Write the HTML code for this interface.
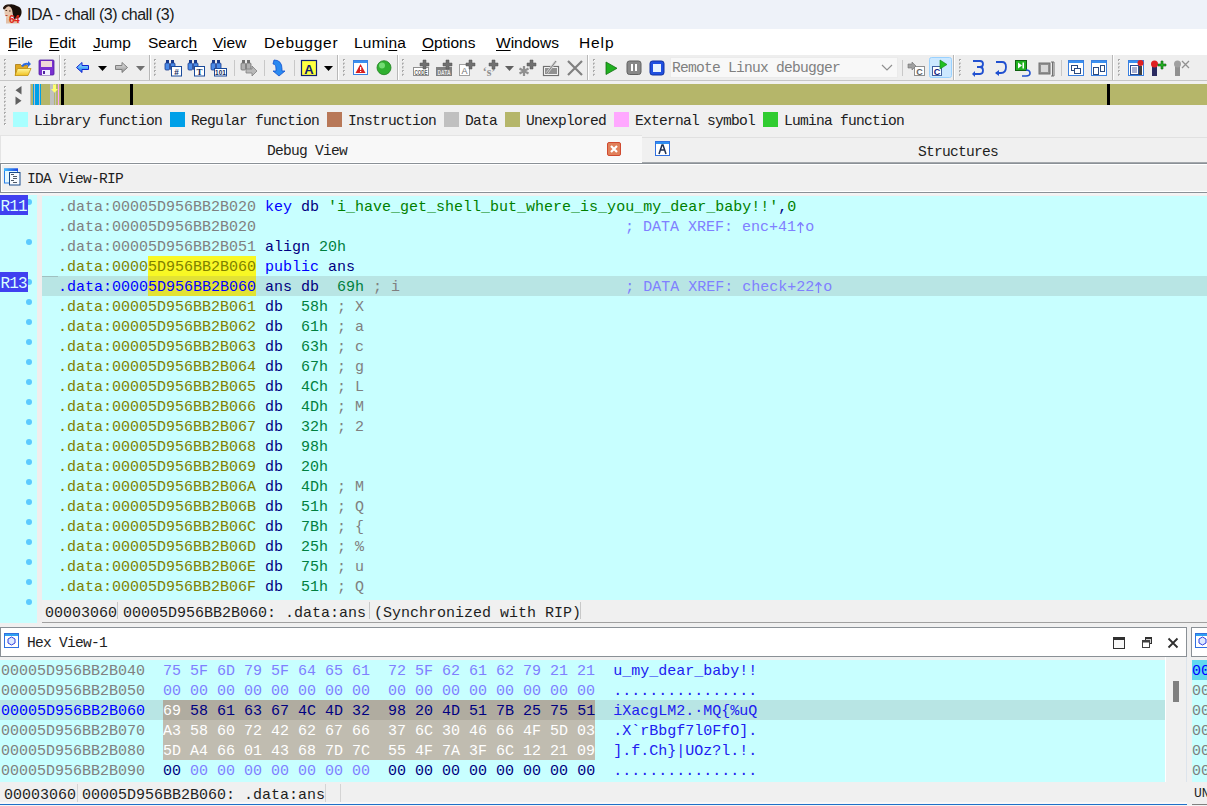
<!DOCTYPE html><html><head><meta charset="utf-8"><style>
*{margin:0;padding:0;box-sizing:border-box}
html,body{width:1207px;height:806px;overflow:hidden;background:#f0f0f0;position:relative;font-family:"Liberation Sans",sans-serif}
div,span.a,svg{position:absolute}
.mi{top:34px;font-size:15.5px;color:#000;line-height:18px;white-space:pre}
.mi u{text-decoration:underline;text-underline-offset:2px}
.lg{top:112px;width:15px;height:15px}
.lt{top:113px;font-family:"Liberation Mono",monospace;font-size:14.6px;letter-spacing:-0.76px;color:#202020;line-height:17px;white-space:pre}
.row{left:0;width:1165px;height:20px}
.tx{left:58px;top:0;height:20px;line-height:24px;font-family:"Liberation Mono",monospace;font-size:15px;white-space:pre}
.ad{color:#808080}.ay{color:#808000}.ab{color:#0000ff}
.kb{color:#0000ff}.kw{color:#000080}.gr{color:#008000}.nm{color:#008040}.cm{color:#808080}.xr{color:#8080ff}
.dot{left:26px;width:6px;height:6px;border-radius:50%;background:#5ccaff}
.st{font-family:"Liberation Mono",monospace;font-size:15px;line-height:18px;color:#1e1e1e;white-space:pre}
.hx{left:1px;height:20px;line-height:24px;font-family:"Liberation Mono",monospace;font-size:15px;white-space:pre}
</style></head><body>
<div style="left:0;top:0;width:1207px;height:29px;background:#eef2f9"></div>
<svg style="left:0;top:0" width="28" height="29" viewBox="0 0 28 29">
<path d="M3 9 Q4 4 9 4.5 Q13 3.5 17 6 Q21 7 21.5 11 Q22 15 19 18 L14 19 L12 12 Z" fill="#1a0e08"/>
<path d="M4.5 9 Q6 5.5 9.5 6.5 Q12 7.5 12.5 12 Q13 16 11 18 Q8 19.5 6 17 Q4 14 4.5 9Z" fill="#e6c6ae"/>
<path d="M3 8 Q5 4 10 5 Q7 6 5 9 Z" fill="#2a1a10"/>
<rect x="5.5" y="10" width="1.6" height="1" fill="#503020"/><rect x="9" y="10.5" width="1.6" height="1" fill="#503020"/>
<rect x="5.5" y="15" width="2" height="1" fill="#c04030"/>
<path d="M6 17 Q9 20 12 18 L14 19 Q18 20 20 23.5 L6 23.5 Q6 20 6 17Z" fill="#e2c0a8"/>
<text x="9" y="23" font-family="Liberation Sans" font-size="10" font-weight="bold" fill="#e02818" letter-spacing="-0.5">64</text>
</svg>
<div style="left:27px;top:5px;font-size:16px;letter-spacing:-0.45px;line-height:19px;color:#1a1a1a;white-space:pre">IDA - chall (3) chall (3)</div>
<div style="left:0;top:29px;width:1207px;height:26px;background:#fff"></div>
<div class="mi" style="left:8px;letter-spacing:0px"><u>F</u>ile</div>
<div class="mi" style="left:49px;letter-spacing:0px"><u>E</u>dit</div>
<div class="mi" style="left:93px;letter-spacing:0px"><u>J</u>ump</div>
<div class="mi" style="left:148px;letter-spacing:0px">Searc<u>h</u></div>
<div class="mi" style="left:213px;letter-spacing:0px"><u>V</u>iew</div>
<div class="mi" style="left:264px;letter-spacing:0.8px">Deb<u>u</u>gger</div>
<div class="mi" style="left:354px;letter-spacing:0.2px">Lumi<u>n</u>a</div>
<div class="mi" style="left:422px;letter-spacing:0px"><u>O</u>ptions</div>
<div class="mi" style="left:496px;letter-spacing:0px"><u>W</u>indows</div>
<div class="mi" style="left:579px;letter-spacing:0.9px">Help</div>
<div style="left:0;top:55px;width:1207px;height:26px;background:#eeeeee;border-bottom:1px solid #c6c6c6"></div>
<svg style="left:0;top:0" width="1207" height="82" viewBox="0 0 1207 82"><rect x="4" y="59" width="2" height="2" fill="#a8a8a8"/><rect x="5" y="60" width="1" height="1" fill="#fff"/><rect x="4" y="62.7" width="2" height="2" fill="#a8a8a8"/><rect x="5" y="63.7" width="1" height="1" fill="#fff"/><rect x="4" y="66.4" width="2" height="2" fill="#a8a8a8"/><rect x="5" y="67.4" width="1" height="1" fill="#fff"/><rect x="4" y="70.10000000000001" width="2" height="2" fill="#a8a8a8"/><rect x="5" y="71.10000000000001" width="1" height="1" fill="#fff"/><rect x="4" y="73.80000000000001" width="2" height="2" fill="#a8a8a8"/><rect x="5" y="74.80000000000001" width="1" height="1" fill="#fff"/><defs><linearGradient id="fg" x1="0" y1="0" x2="0" y2="1"><stop offset="0" stop-color="#fff8a0"/><stop offset="1" stop-color="#f0c020"/></linearGradient><linearGradient id="bg" x1="0" y1="0" x2="0" y2="1"><stop offset="0" stop-color="#a0f0ff"/><stop offset="1" stop-color="#1070f0"/></linearGradient><linearGradient id="gg" x1="0" y1="0" x2="0" y2="1"><stop offset="0" stop-color="#e8e8e8"/><stop offset="1" stop-color="#909090"/></linearGradient></defs><path d="M15.5 64.5h5l1 1h6v3h-9l-3 7z" fill="#e0a820" stroke="#a87810" stroke-width="0.8"/><path d="M17.5 68.5h13.5l-3 7h-13z" fill="url(#fg)" stroke="#c09010" stroke-width="0.8"/><path d="M21 66q3-4 7-3v-2l3 3l-3 3v-2q-3-1-5 2z" fill="#2a6ae0"/><rect x="39" y="60" width="15" height="15" rx="1" fill="#7a30d0" stroke="#5020a0" stroke-width="0.8"/><rect x="41" y="61" width="11" height="6" fill="#f0d8d8"/><rect x="42" y="70" width="8" height="5" fill="#f0f0ff"/><rect x="43" y="71" width="2" height="3" fill="#5020a0"/><rect x="59" y="55" width="1" height="25" fill="#b8b8b8"/><rect x="60" y="55" width="1" height="25" fill="#ffffff"/><rect x="64" y="59" width="2" height="2" fill="#a8a8a8"/><rect x="65" y="60" width="1" height="1" fill="#fff"/><rect x="64" y="62.7" width="2" height="2" fill="#a8a8a8"/><rect x="65" y="63.7" width="1" height="1" fill="#fff"/><rect x="64" y="66.4" width="2" height="2" fill="#a8a8a8"/><rect x="65" y="67.4" width="1" height="1" fill="#fff"/><rect x="64" y="70.10000000000001" width="2" height="2" fill="#a8a8a8"/><rect x="65" y="71.10000000000001" width="1" height="1" fill="#fff"/><rect x="64" y="73.80000000000001" width="2" height="2" fill="#a8a8a8"/><rect x="65" y="74.80000000000001" width="1" height="1" fill="#fff"/><path d="M76.5 67.5l5.5-5v3h6.5v4h-6.5v3z" fill="url(#bg)" stroke="#1020d0" stroke-width="1"/><path d="M98 66h9l-4.5 5z" fill="#000"/><path d="M127.5 67.5l-5.5-5v3h-6.5v4h6.5v3z" fill="url(#gg)" stroke="#808080" stroke-width="1"/><path d="M136 66h9l-4.5 5z" fill="#707070"/><rect x="149" y="55" width="1" height="25" fill="#b8b8b8"/><rect x="150" y="55" width="1" height="25" fill="#ffffff"/><rect x="154" y="59" width="2" height="2" fill="#a8a8a8"/><rect x="155" y="60" width="1" height="1" fill="#fff"/><rect x="154" y="62.7" width="2" height="2" fill="#a8a8a8"/><rect x="155" y="63.7" width="1" height="1" fill="#fff"/><rect x="154" y="66.4" width="2" height="2" fill="#a8a8a8"/><rect x="155" y="67.4" width="1" height="1" fill="#fff"/><rect x="154" y="70.10000000000001" width="2" height="2" fill="#a8a8a8"/><rect x="155" y="71.10000000000001" width="1" height="1" fill="#fff"/><rect x="154" y="73.80000000000001" width="2" height="2" fill="#a8a8a8"/><rect x="155" y="74.80000000000001" width="1" height="1" fill="#fff"/><rect x="166" y="60" width="3" height="3" fill="#1a3a8a"/><rect x="171" y="60" width="3" height="3" fill="#1a3a8a"/><rect x="165" y="63" width="4.5" height="7" rx="1" fill="#4a8ae8" stroke="#1a3a8a" stroke-width="0.8"/><rect x="170.5" y="63" width="4.5" height="7" rx="1" fill="#4a8ae8" stroke="#1a3a8a" stroke-width="0.8"/><rect x="171.5" y="66.5" width="10" height="9.5" fill="#fff" stroke="#1a4a9a"/><text x="176.5" y="75" font-family="Liberation Serif" font-weight="bold" font-size="9" text-anchor="middle" fill="#102a60">#</text><rect x="189" y="60" width="3" height="3" fill="#1a3a8a"/><rect x="194" y="60" width="3" height="3" fill="#1a3a8a"/><rect x="188" y="63" width="4.5" height="7" rx="1" fill="#4a8ae8" stroke="#1a3a8a" stroke-width="0.8"/><rect x="193.5" y="63" width="4.5" height="7" rx="1" fill="#4a8ae8" stroke="#1a3a8a" stroke-width="0.8"/><rect x="194.5" y="66.5" width="10" height="9.5" fill="#fff" stroke="#1a4a9a"/><text x="199.5" y="75" font-family="Liberation Serif" font-weight="bold" font-size="9" text-anchor="middle" fill="#102a60">T</text><rect x="212" y="60" width="3" height="3" fill="#1a3a8a"/><rect x="217" y="60" width="3" height="3" fill="#1a3a8a"/><rect x="211" y="63" width="4.5" height="7" rx="1" fill="#4a8ae8" stroke="#1a3a8a" stroke-width="0.8"/><rect x="216.5" y="63" width="4.5" height="7" rx="1" fill="#4a8ae8" stroke="#1a3a8a" stroke-width="0.8"/><rect x="214.5" y="68.5" width="12" height="7.5" fill="#fff" stroke="#1a4a9a"/><text x="220.5" y="75" font-family="Liberation Sans" font-weight="bold" font-size="6.5" text-anchor="middle" fill="#102a60">101</text><rect x="234" y="60" width="1" height="16" fill="#c8c8c8"/><rect x="242" y="60" width="3" height="3" fill="#707070"/><rect x="247" y="60" width="3" height="3" fill="#707070"/><rect x="241" y="63" width="4.5" height="7" rx="1" fill="#b0b0b0" stroke="#707070" stroke-width="0.8"/><rect x="246.5" y="63" width="4.5" height="7" rx="1" fill="#b0b0b0" stroke="#707070" stroke-width="0.8"/><path d="M257 71l-5-5v3h-6v4h6v3z" fill="#b8b8b8" stroke="#808080" stroke-width="0.8"/><rect x="264" y="60" width="1" height="16" fill="#c8c8c8"/><path d="M274 60q8 0 8 9v2h3l-6 5l-6-5h3v-2q0-5-3-5z" fill="#2a8af0" stroke="#1050d0" stroke-width="0.8"/><rect x="294" y="60" width="1" height="16" fill="#c8c8c8"/><rect x="301.5" y="60.5" width="15" height="15" fill="#ffff40" stroke="#102070" stroke-width="1.2"/><text x="309" y="73.5" font-family="Liberation Sans" font-weight="bold" font-size="13" text-anchor="middle" fill="#102070">A</text><path d="M324 66h9l-4.5 5z" fill="#000"/><rect x="337" y="55" width="1" height="25" fill="#b8b8b8"/><rect x="338" y="55" width="1" height="25" fill="#ffffff"/><rect x="343" y="59" width="2" height="2" fill="#a8a8a8"/><rect x="344" y="60" width="1" height="1" fill="#fff"/><rect x="343" y="62.7" width="2" height="2" fill="#a8a8a8"/><rect x="344" y="63.7" width="1" height="1" fill="#fff"/><rect x="343" y="66.4" width="2" height="2" fill="#a8a8a8"/><rect x="344" y="67.4" width="1" height="1" fill="#fff"/><rect x="343" y="70.10000000000001" width="2" height="2" fill="#a8a8a8"/><rect x="344" y="71.10000000000001" width="1" height="1" fill="#fff"/><rect x="343" y="73.80000000000001" width="2" height="2" fill="#a8a8a8"/><rect x="344" y="74.80000000000001" width="1" height="1" fill="#fff"/><rect x="353.5" y="60.5" width="14" height="14" fill="#fff" stroke="#3a80e0"/><rect x="354" y="61" width="13" height="2" fill="#3a90f0"/><path d="M360.5 64l5 9h-10z" fill="#d82020"/><rect x="360" y="67" width="1.2" height="3" fill="#fff"/><rect x="360" y="71" width="1.2" height="1" fill="#fff"/><circle cx="384" cy="67.7" r="7" fill="#30b030" stroke="#208020" stroke-width="0.8"/><circle cx="382" cy="65.5" r="3" fill="#90f090" opacity="0.7"/><rect x="397" y="55" width="1" height="25" fill="#b8b8b8"/><rect x="398" y="55" width="1" height="25" fill="#ffffff"/><rect x="402" y="59" width="2" height="2" fill="#a8a8a8"/><rect x="403" y="60" width="1" height="1" fill="#fff"/><rect x="402" y="62.7" width="2" height="2" fill="#a8a8a8"/><rect x="403" y="63.7" width="1" height="1" fill="#fff"/><rect x="402" y="66.4" width="2" height="2" fill="#a8a8a8"/><rect x="403" y="67.4" width="1" height="1" fill="#fff"/><rect x="402" y="70.10000000000001" width="2" height="2" fill="#a8a8a8"/><rect x="403" y="71.10000000000001" width="1" height="1" fill="#fff"/><rect x="402" y="73.80000000000001" width="2" height="2" fill="#a8a8a8"/><rect x="403" y="74.80000000000001" width="1" height="1" fill="#fff"/><rect x="413.5" y="67.5" width="15" height="8" fill="#fff" stroke="#909090"/><text x="414.5" y="74.5" font-family="Liberation Sans" font-weight="bold" font-size="7" textLength="13" lengthAdjust="spacingAndGlyphs" fill="#606060">CODE</text><path d="M423 60h3v3h3v3h-3v3h-3v-3h-3v-3h3z" fill="#707070" stroke="#505050" stroke-width="0.5"/><rect x="436" y="67" width="16" height="9" fill="#808080"/><text x="437.5" y="74.5" font-family="Liberation Sans" font-weight="bold" font-size="7" textLength="13" lengthAdjust="spacingAndGlyphs" fill="#e8e8e8">DATA</text><path d="M446 60h3v3h3v3h-3v3h-3v-3h-3v-3h3z" fill="#707070" stroke="#505050" stroke-width="0.5"/><rect x="459.5" y="64.5" width="10" height="11" fill="#fff" stroke="#a0a0a0"/><text x="464.5" y="74" font-family="Liberation Sans" font-size="9" text-anchor="middle" fill="#707070">A</text><path d="M469 60h3v3h3v3h-3v3h-3v-3h-3v-3h3z" fill="#707070" stroke="#505050" stroke-width="0.5"/><text x="489" y="76" font-family="Liberation Serif" font-weight="bold" font-size="12" text-anchor="middle" fill="#909090">‘s’</text><path d="M492 60h3v3h3v3h-3v3h-3v-3h-3v-3h3z" fill="#707070" stroke="#505050" stroke-width="0.5"/><path d="M505 66h9l-4.5 5z" fill="#606060"/><path d="M524 66v10M519.5 68.5l9 5M528.5 68.5l-9 5" stroke="#909090" stroke-width="2.2"/><path d="M530 60h3v3h3v3h-3v3h-3v-3h-3v-3h3z" fill="#707070" stroke="#505050" stroke-width="0.5"/><rect x="543.5" y="66.5" width="15" height="9" fill="#fff" stroke="#707070" stroke-width="1.2"/><rect x="545" y="68" width="12" height="6" fill="#909090"/><path d="M547 73l9-12" stroke="#d0d0d0" stroke-width="2.5"/><path d="M547 73l9-12" stroke="#808080" stroke-width="1" /><path d="M568 61l14 14M582 61l-14 14" stroke="#808080" stroke-width="2.2"/><rect x="587" y="55" width="1" height="25" fill="#b8b8b8"/><rect x="588" y="55" width="1" height="25" fill="#ffffff"/><rect x="593" y="59" width="2" height="2" fill="#a8a8a8"/><rect x="594" y="60" width="1" height="1" fill="#fff"/><rect x="593" y="62.7" width="2" height="2" fill="#a8a8a8"/><rect x="594" y="63.7" width="1" height="1" fill="#fff"/><rect x="593" y="66.4" width="2" height="2" fill="#a8a8a8"/><rect x="594" y="67.4" width="1" height="1" fill="#fff"/><rect x="593" y="70.10000000000001" width="2" height="2" fill="#a8a8a8"/><rect x="594" y="71.10000000000001" width="1" height="1" fill="#fff"/><rect x="593" y="73.80000000000001" width="2" height="2" fill="#a8a8a8"/><rect x="594" y="74.80000000000001" width="1" height="1" fill="#fff"/><path d="M606 62v12.5l11-6.2z" fill="#20b020" stroke="#107010" stroke-width="0.8"/><rect x="627" y="61" width="14" height="13.5" rx="2.5" fill="#888" stroke="#606060"/><rect x="631" y="64" width="2" height="7" fill="#fff"/><rect x="635" y="64" width="2" height="7" fill="#fff"/><rect x="650" y="61" width="14" height="14" rx="2.5" fill="#2050e0" stroke="#1030a0"/><rect x="653" y="64" width="8" height="8" fill="#e8f4ff"/><rect x="670.5" y="57.5" width="227" height="20" fill="#f8f8f8" stroke="#ebebeb"/><path d="M882 65l5 5l5-5" stroke="#909090" stroke-width="1.2" fill="none"/><rect x="902" y="60" width="1" height="16" fill="#c8c8c8"/><rect x="914.5" y="66.5" width="10" height="9" fill="#fff" stroke="#909090"/><text x="919.5" y="75" font-family="Liberation Sans" font-weight="bold" font-size="9" text-anchor="middle" fill="#606060">C</text><path d="M916 66l-4-4v2h-4v4h4v2z" fill="#a0a0a0" stroke="#707070" stroke-width="0.6"/><rect x="929.5" y="57.5" width="22" height="20" rx="2" fill="#cce8ff" stroke="#99d1ff"/><rect x="932.5" y="66.5" width="9" height="9" fill="#fff" stroke="#4060a0"/><text x="937" y="75" font-family="Liberation Sans" font-weight="bold" font-size="9" text-anchor="middle" fill="#102080">C</text><path d="M940 60v9l7-4.5z" fill="#20c020" stroke="#108010" stroke-width="0.6"/><rect x="953" y="55" width="1" height="25" fill="#b8b8b8"/><rect x="954" y="55" width="1" height="25" fill="#ffffff"/><rect x="959" y="59" width="2" height="2" fill="#a8a8a8"/><rect x="960" y="60" width="1" height="1" fill="#fff"/><rect x="959" y="62.7" width="2" height="2" fill="#a8a8a8"/><rect x="960" y="63.7" width="1" height="1" fill="#fff"/><rect x="959" y="66.4" width="2" height="2" fill="#a8a8a8"/><rect x="960" y="67.4" width="1" height="1" fill="#fff"/><rect x="959" y="70.10000000000001" width="2" height="2" fill="#a8a8a8"/><rect x="960" y="71.10000000000001" width="1" height="1" fill="#fff"/><rect x="959" y="73.80000000000001" width="2" height="2" fill="#a8a8a8"/><rect x="960" y="74.80000000000001" width="1" height="1" fill="#fff"/><path d="M973 61h7q3 0 3 3q0 3-3 3h-3M977 67h3q3 0 3 3.5q0 3.5-3 3.5h-6" stroke="#2050d0" stroke-width="1.8" fill="none"/><path d="M972 74l3-3v6z" fill="#2050d0"/><path d="M996 62h6q4 0 4 5q0 6-5 6h-5" stroke="#2050d0" stroke-width="1.8" fill="none"/><path d="M995 73l4-3v6z" fill="#2050d0"/><rect x="1015.5" y="60.5" width="11" height="10" fill="#20b020" stroke="#106010"/><path d="M1018 62.5v6l4-3z" fill="#fff"/><rect x="1022.5" y="62.5" width="1.5" height="6" fill="#fff"/><path d="M1026 70q4 0 4 3t-4 3h-4" stroke="#2050d0" stroke-width="1.6" fill="none"/><rect x="1039" y="63" width="11" height="11" fill="#909090" stroke="#707070"/><rect x="1041" y="65" width="7" height="7" fill="#d8d8d8"/><path d="M1051 62h3v14h-3M1052.5 62v14" stroke="#707070" stroke-width="1" fill="none"/><rect x="1061" y="60" width="1" height="16" fill="#c8c8c8"/><rect x="1068.5" y="60.5" width="15" height="15" fill="#fff" stroke="#3a80e0"/><rect x="1069" y="61" width="14" height="2" fill="#3a90f0"/><rect x="1071.5" y="65.5" width="6" height="5" fill="none" stroke="#2a4a80"/><rect x="1074.5" y="68.5" width="6" height="5" fill="#fff" stroke="#2a4a80"/><rect x="1091.5" y="60.5" width="15" height="15" fill="#fff" stroke="#3a80e0"/><rect x="1092" y="61" width="14" height="2" fill="#3a90f0"/><rect x="1093.5" y="67.5" width="5" height="7" fill="#fff" stroke="#2a4a80"/><rect x="1100.5" y="65.5" width="4" height="6" fill="#fff" stroke="#2a4a80"/><rect x="1112" y="55" width="1" height="25" fill="#b8b8b8"/><rect x="1113" y="55" width="1" height="25" fill="#ffffff"/><rect x="1118" y="59" width="2" height="2" fill="#a8a8a8"/><rect x="1119" y="60" width="1" height="1" fill="#fff"/><rect x="1118" y="62.7" width="2" height="2" fill="#a8a8a8"/><rect x="1119" y="63.7" width="1" height="1" fill="#fff"/><rect x="1118" y="66.4" width="2" height="2" fill="#a8a8a8"/><rect x="1119" y="67.4" width="1" height="1" fill="#fff"/><rect x="1118" y="70.10000000000001" width="2" height="2" fill="#a8a8a8"/><rect x="1119" y="71.10000000000001" width="1" height="1" fill="#fff"/><rect x="1118" y="73.80000000000001" width="2" height="2" fill="#a8a8a8"/><rect x="1119" y="74.80000000000001" width="1" height="1" fill="#fff"/><rect x="1128.5" y="60.5" width="15" height="15" fill="#fff" stroke="#3a80e0"/><rect x="1129" y="61" width="14" height="2" fill="#3a90f0"/><rect x="1130.5" y="65.5" width="8" height="9" fill="#fff" stroke="#2a4a90"/><path d="M1132 68h5M1132 70h5M1132 72h5" stroke="#2a3a90" stroke-width="0.8"/><rect x="1139" y="66" width="3" height="9" fill="#404040"/><circle cx="1140.5" cy="63" r="3" fill="#e02020"/><rect x="1152" y="66" width="5" height="10" fill="#2a2a60"/><circle cx="1154.5" cy="64" r="3.5" fill="#e02020"/><path d="M1161 61h2v3h3v2h-3v3h-2v-3h-3v-2h3z" fill="#20b020" stroke="#106010" stroke-width="0.6"/><rect x="1175" y="66" width="5" height="10" fill="#909090"/><circle cx="1177.5" cy="64" r="3.5" fill="#a0a0a0"/><path d="M1182 61l7 7M1189 61l-7 7" stroke="#909090" stroke-width="1.3"/></svg><div style="left:672px;top:60px;font-family:'Liberation Mono',monospace;font-size:14.6px;letter-spacing:-0.76px;line-height:17px;color:#808080;white-space:pre">Remote Linux debugger</div>
<div style="left:30px;top:84px;width:1177px;height:21px;background:#b5b66a"></div>
<div style="left:30px;top:84px;width:1px;height:21px;background:#c0c0c0"></div>
<div style="left:33px;top:84px;width:1px;height:21px;background:#00a0e8"></div>
<div style="left:34px;top:84px;width:1px;height:21px;background:#c0c0c0"></div>
<div style="left:35px;top:84px;width:4px;height:21px;background:#00a0e8"></div>
<div style="left:39px;top:84px;width:1px;height:21px;background:#c0c0c0"></div>
<div style="left:40px;top:84px;width:1px;height:21px;background:#00a0e8"></div>
<div style="left:50px;top:84px;width:4px;height:21px;background:#c0c0c0"></div>
<div style="left:55px;top:84px;width:1px;height:21px;background:#c0c0c0"></div>
<div style="left:58px;top:84px;width:1px;height:21px;background:#ffa0ff"></div>
<div style="left:61px;top:84px;width:3px;height:21px;background:#000"></div>
<div style="left:130px;top:84px;width:3px;height:21px;background:#000"></div>
<div style="left:1107px;top:84px;width:3px;height:21px;background:#000"></div>
<svg style="left:51px;top:84px" width="7" height="10" viewBox="0 0 7 10"><path d="M2 0.5h3v4.5h2l-3.5 3.8l-3.5-3.8h2z" fill="#ffff70"/></svg>
<svg style="left:0;top:80px" width="10" height="50" viewBox="0 80 10 50"><rect x="4" y="86.0" width="2" height="2" fill="#a8a8a8"/><rect x="5" y="87.0" width="1" height="1" fill="#fff"/><rect x="4" y="89.7" width="2" height="2" fill="#a8a8a8"/><rect x="5" y="90.7" width="1" height="1" fill="#fff"/><rect x="4" y="93.4" width="2" height="2" fill="#a8a8a8"/><rect x="5" y="94.4" width="1" height="1" fill="#fff"/><rect x="4" y="97.1" width="2" height="2" fill="#a8a8a8"/><rect x="5" y="98.1" width="1" height="1" fill="#fff"/><rect x="4" y="100.8" width="2" height="2" fill="#a8a8a8"/><rect x="5" y="101.8" width="1" height="1" fill="#fff"/><rect x="4" y="104.5" width="2" height="2" fill="#a8a8a8"/><rect x="5" y="105.5" width="1" height="1" fill="#fff"/><rect x="4" y="108.2" width="2" height="2" fill="#a8a8a8"/><rect x="5" y="109.2" width="1" height="1" fill="#fff"/><rect x="4" y="111.9" width="2" height="2" fill="#a8a8a8"/><rect x="5" y="112.9" width="1" height="1" fill="#fff"/><rect x="4" y="115.6" width="2" height="2" fill="#a8a8a8"/><rect x="5" y="116.6" width="1" height="1" fill="#fff"/><rect x="4" y="119.3" width="2" height="2" fill="#a8a8a8"/><rect x="5" y="120.3" width="1" height="1" fill="#fff"/><rect x="4" y="123.0" width="2" height="2" fill="#a8a8a8"/><rect x="5" y="124.0" width="1" height="1" fill="#fff"/></svg>
<svg style="left:12px;top:84px" width="12" height="22" viewBox="0 0 12 22"><path d="M9.5 2v8.5l-6-4.25z" fill="#606060"/><path d="M3.5 12.5v8.5l6-4.25z" fill="#606060"/></svg>
<div class="lg" style="left:13px;background:#a8ffff"></div><div class="lt" style="left:34px">Library function</div>
<div class="lg" style="left:170px;background:#00a0e8"></div><div class="lt" style="left:191px">Regular function</div>
<div class="lg" style="left:327px;background:#b87858"></div><div class="lt" style="left:348px">Instruction</div>
<div class="lg" style="left:444px;background:#c0c0c0"></div><div class="lt" style="left:465px">Data</div>
<div class="lg" style="left:505px;background:#b5b66a"></div><div class="lt" style="left:526px">Unexplored</div>
<div class="lg" style="left:614px;background:#ffa8ff"></div><div class="lt" style="left:635px">External symbol</div>
<div class="lg" style="left:763px;background:#30cc30"></div><div class="lt" style="left:784px">Lumina function</div>
<div style="left:0;top:135px;width:642px;height:28px;background:#f8f8f8;border-top:1px solid #e4e4e4;border-left:1px solid #e4e4e4;border-bottom:1px solid #ffffff"></div>
<div style="left:642px;top:137px;width:565px;height:26px;background:#f0f0f0;border-top:1px solid #e0e0e0;border-bottom:1px solid #ffffff"></div>
<div style="left:642px;top:162px;width:565px;height:1px;background:#a4a8ac"></div>
<div class="st" style="left:267px;top:142.5px;font-size:14.6px;letter-spacing:-0.76px;line-height:17px">Debug View</div>
<div class="st" style="left:918px;top:143.5px;font-size:14.6px;letter-spacing:-0.76px;line-height:17px">Structures</div>
<div style="left:607px;top:142px;width:14px;height:14px;background:#e0805a;border:1px solid #d04a30;border-radius:2px"></div>
<svg style="left:607px;top:142px" width="14" height="14" viewBox="0 0 14 14"><path d="M4 4L10 10M10 4L4 10" stroke="#fff" stroke-width="2.2"/></svg>
<svg style="left:655px;top:141px" width="15" height="15" viewBox="0 0 15 15"><rect x="0.5" y="0.5" width="14" height="14" fill="#fff" stroke="#3070e0"/><rect x="1" y="1" width="13" height="2" fill="#3090f0"/><path d="M4 13L7 4h1l3 9M5 9h5" stroke="#203050" stroke-width="1.5" fill="none"/></svg>
<div style="left:0;top:163px;width:1207px;height:30px;background:#f0f0f0;border:1px solid #8a9096;border-right:none"></div>
<div style="left:1px;top:164px;width:1206px;height:1px;background:#ffffff"></div>
<div style="left:1px;top:164px;width:1px;height:28px;background:#ffffff"></div>
<div style="left:1px;top:191px;width:1206px;height:1px;background:#ffffff"></div>
<svg style="left:4px;top:168px" width="17" height="18" viewBox="0 0 17 18"><defs><linearGradient id="g1" x1="0" x2="1"><stop offset="0" stop-color="#40c0ff"/><stop offset="1" stop-color="#2040e0"/></linearGradient></defs><rect x="0.5" y="1" width="13" height="14" fill="#e4f8ff" stroke="#2a80e8"/><rect x="0" y="0.5" width="14" height="2.5" fill="url(#g1)"/><rect x="5.5" y="4.5" width="10.5" height="12.5" fill="#f8fbff" stroke="#1a4a8a"/><path d="M7 6.5h3M9 8.5h4M9 10.5h4M7 12.5h3M9 14.5h4" stroke="#505a68" stroke-width="1"/></svg>
<div class="st" style="left:27px;top:170.5px;font-size:14.6px;letter-spacing:-0.76px;line-height:17px">IDA View-RIP</div>
<div style="left:0;top:193px;width:1207px;height:2px;background:#f4f4f4"></div>
<div style="left:0;top:195px;width:37px;height:428px;background:#c8ffff"></div>
<div style="left:37px;top:195px;width:5px;height:428px;background:#f0eeee"></div>
<div style="left:42px;top:196px;width:1165px;height:404px;background:#c8ffff"></div>
<div class="tx" style="top:196px"><span class="ad">.data:00005D956BB2B020 </span><span class="kb">key</span><span class="kw"> db </span><span class="gr">&#x27;i_have_get_shell_but_where_is_you_my_dear_baby!!&#x27;</span><span class="kw">,</span><span class="gr">0</span></div>
<div class="tx" style="top:216px"><span class="ad">.data:00005D956BB2B020                                         </span><span class="xr">; DATA XREF: enc+41</span><span style="display:inline-block;width:9px;height:20px;position:relative;vertical-align:top"><svg style="left:1px;top:6px" width="7" height="11" viewBox="0 0 7 11"><path d="M3.5 0.5L6.5 4M3.5 0.5L0.5 4M3.5 1v10" stroke="#8080ff" stroke-width="1.3" fill="none"/></svg></span><span class="xr">o</span></div>
<div class="tx" style="top:236px"><span class="ad">.data:00005D956BB2B051 </span><span class="kw">align </span><span class="nm">20h</span></div>
<div style="left:148px;top:256px;width:108px;height:20px;background:#f8f824"></div>
<div class="tx" style="top:256px"><span class="ay">.data:0000</span><span class="ay">5D956BB2B060</span><span class="ay"> </span><span class="kb">public</span><span class="kw"> ans</span></div>
<div style="left:42px;top:276px;width:1165px;height:20px;background:#b8e5e4"></div>
<div style="left:42px;top:276px;width:16px;height:1px;background:#a0c0c0"></div>
<div style="left:148px;top:276px;width:108px;height:20px;background:#e2e234"></div>
<div class="tx" style="top:276px"><span class="ab">.data:0000</span><span class="ab">5D956BB2B060</span><span class="ab"> </span><span class="kw">ans db  </span><span class="nm">69h</span><span class="cm"> ; i</span><span class="cm">                         </span><span class="xr">; DATA XREF: check+22</span><span style="display:inline-block;width:9px;height:20px;position:relative;vertical-align:top"><svg style="left:1px;top:6px" width="7" height="11" viewBox="0 0 7 11"><path d="M3.5 0.5L6.5 4M3.5 0.5L0.5 4M3.5 1v10" stroke="#8080ff" stroke-width="1.3" fill="none"/></svg></span><span class="xr">o</span></div>
<div class="tx" style="top:296px"><span class="ay">.data:00005D956BB2B061 </span><span class="kw">db  </span><span class="nm">58h</span><span class="cm"> ; X</span></div>
<div class="tx" style="top:316px"><span class="ay">.data:00005D956BB2B062 </span><span class="kw">db  </span><span class="nm">61h</span><span class="cm"> ; a</span></div>
<div class="tx" style="top:336px"><span class="ay">.data:00005D956BB2B063 </span><span class="kw">db  </span><span class="nm">63h</span><span class="cm"> ; c</span></div>
<div class="tx" style="top:356px"><span class="ay">.data:00005D956BB2B064 </span><span class="kw">db  </span><span class="nm">67h</span><span class="cm"> ; g</span></div>
<div class="tx" style="top:376px"><span class="ay">.data:00005D956BB2B065 </span><span class="kw">db  </span><span class="nm">4Ch</span><span class="cm"> ; L</span></div>
<div class="tx" style="top:396px"><span class="ay">.data:00005D956BB2B066 </span><span class="kw">db  </span><span class="nm">4Dh</span><span class="cm"> ; M</span></div>
<div class="tx" style="top:416px"><span class="ay">.data:00005D956BB2B067 </span><span class="kw">db  </span><span class="nm">32h</span><span class="cm"> ; 2</span></div>
<div class="tx" style="top:436px"><span class="ay">.data:00005D956BB2B068 </span><span class="kw">db  </span><span class="nm">98h</span></div>
<div class="tx" style="top:456px"><span class="ay">.data:00005D956BB2B069 </span><span class="kw">db  </span><span class="nm">20h</span></div>
<div class="tx" style="top:476px"><span class="ay">.data:00005D956BB2B06A </span><span class="kw">db  </span><span class="nm">4Dh</span><span class="cm"> ; M</span></div>
<div class="tx" style="top:496px"><span class="ay">.data:00005D956BB2B06B </span><span class="kw">db  </span><span class="nm">51h</span><span class="cm"> ; Q</span></div>
<div class="tx" style="top:516px"><span class="ay">.data:00005D956BB2B06C </span><span class="kw">db  </span><span class="nm">7Bh</span><span class="cm"> ; {</span></div>
<div class="tx" style="top:536px"><span class="ay">.data:00005D956BB2B06D </span><span class="kw">db  </span><span class="nm">25h</span><span class="cm"> ; %</span></div>
<div class="tx" style="top:556px"><span class="ay">.data:00005D956BB2B06E </span><span class="kw">db  </span><span class="nm">75h</span><span class="cm"> ; u</span></div>
<div class="tx" style="top:576px"><span class="ay">.data:00005D956BB2B06F </span><span class="kw">db  </span><span class="nm">51h</span><span class="cm"> ; Q</span></div>
<div class="dot" style="top:199px"></div>
<div class="dot" style="top:239px"></div>
<div class="dot" style="top:279px"></div>
<div class="dot" style="top:299px"></div>
<div class="dot" style="top:319px"></div>
<div class="dot" style="top:339px"></div>
<div class="dot" style="top:359px"></div>
<div class="dot" style="top:379px"></div>
<div class="dot" style="top:399px"></div>
<div class="dot" style="top:419px"></div>
<div class="dot" style="top:439px"></div>
<div class="dot" style="top:459px"></div>
<div class="dot" style="top:479px"></div>
<div class="dot" style="top:499px"></div>
<div class="dot" style="top:519px"></div>
<div class="dot" style="top:539px"></div>
<div class="dot" style="top:559px"></div>
<div class="dot" style="top:579px"></div>
<div class="dot" style="top:599px"></div>
<div style="left:0;top:195px;width:28px;height:20px;background:#4040f0"></div>
<div class="st" style="left:0.5px;top:195px;color:#d8ffff;font-size:16px;line-height:24px;letter-spacing:-0.9px">R11</div>
<div style="left:0;top:272px;width:28px;height:20px;background:#4040f0"></div>
<div class="st" style="left:0.5px;top:272px;color:#d8ffff;font-size:16px;line-height:24px;letter-spacing:-0.9px">R13</div>
<div style="left:42px;top:600px;width:1165px;height:23px;background:#f0f0f0;border-bottom:1px solid #a0a0a0"></div>
<div class="st" style="left:45px;top:604.5px">00003060</div>
<div style="left:117px;top:602px;width:1px;height:17px;background:#c8c8c8"></div>
<div class="st" style="left:123px;top:604.5px">00005D956BB2B060: .data:ans</div>
<div style="left:369px;top:602px;width:1px;height:17px;background:#c8c8c8"></div>
<div class="st" style="left:374px;top:604.5px">(Synchronized with RIP)</div>
<div style="left:580px;top:602px;width:1px;height:17px;background:#c8c8c8"></div>
<div style="left:0;top:627px;width:1187px;height:30px;background:#fff;border:1px solid #8a9096"></div>
<svg style="left:4px;top:633px" width="15" height="15" viewBox="0 0 15 15"><rect x="0.5" y="0.5" width="14" height="14" fill="#fff" stroke="#3070e0"/><rect x="1" y="1" width="13" height="2" fill="#30a0f0"/><path d="M7.5 4L11 6v4l-3.5 2L4 10V6z" fill="#dde8ff" stroke="#3040e0"/></svg>
<div class="st" style="left:27px;top:634.5px;font-size:14.6px;letter-spacing:-0.76px;line-height:17px">Hex View-1</div>
<svg style="left:1100px;top:630px" width="60" height="26" viewBox="1100 630 60 26"><rect x="1113.5" y="637.5" width="11" height="11" fill="#f8f8f8" stroke="#303030"/><rect x="1113" y="637" width="12" height="3" fill="#303030"/><rect x="1145.5" y="637.5" width="6" height="6" fill="#d0d0d0" stroke="#303030"/><rect x="1145" y="637" width="7" height="2" fill="#303030"/><rect x="1142.5" y="640.5" width="7" height="7" fill="#fff" stroke="#404040"/><rect x="1142" y="640" width="8" height="2.5" fill="#404040"/></svg>
<svg style="left:1167px;top:637px" width="12" height="12" viewBox="0 0 12 12"><path d="M1.5 1.5L10.5 10.5M10.5 1.5L1.5 10.5" stroke="#303030" stroke-width="1.8"/></svg>
<div style="left:0;top:660px;width:1165px;height:122px;background:#c8ffff"></div>
<div style="left:1165px;top:657px;width:22px;height:126px;background:#f0f0f0"></div>
<div style="left:1173px;top:681px;width:6px;height:21px;background:#808080"></div>
<div style="left:1165px;top:657px;width:1px;height:126px;background:#ffffff"></div>
<div style="left:1186px;top:657px;width:1px;height:126px;background:#dde4ec"></div>
<div style="left:0;top:700px;width:1165px;height:20px;background:#b8e5e4"></div>
<div style="left:163px;top:700px;width:432px;height:20px;background:#b0aca0"></div>
<div style="left:163px;top:720px;width:432px;height:40px;background:#c0bcb0"></div>
<div class="hx" style="top:660px"><span class="ad">00005D956BB2B040</span>  <span class="xr">75 5F 6D 79 5F 64 65 61  72 5F 62 61 62 79 21 21</span>  <span style="color:#2020f0">u_my_dear_baby!!</span></div>
<div class="hx" style="top:680px"><span class="ad">00005D956BB2B050</span>  <span class="xr">00 00 00 00 00 00 00 00  00 00 00 00 00 00 00 00</span>  <span style="color:#2020f0">................</span></div>
<div class="hx" style="top:700px"><span class="ab">00005D956BB2B060</span>  <span style="color:#ffffff">69</span><span class="kw"> 58 61 63 67 4C 4D 32  98 20 4D 51 7B 25 75 51</span>  <span style="color:#2020f0">iXacgLM2.·MQ{%uQ</span></div>
<div class="hx" style="top:720px"><span class="ad">00005D956BB2B070</span>  <span style="color:#ffffff">A3 58 60 72 42 62 67 66  37 6C 30 46 66 4F 5D 03</span>  <span style="color:#2020f0">.X`rBbgf7l0FfO].</span></div>
<div class="hx" style="top:740px"><span class="ad">00005D956BB2B080</span>  <span style="color:#ffffff">5D A4 66 01 43 68 7D 7C  55 4F 7A 3F 6C 12 21 09</span>  <span style="color:#2020f0">].f.Ch}|UOz?l.!.</span></div>
<div class="hx" style="top:760px"><span class="ad">00005D956BB2B090</span>  <span class="kw">00</span><span class="xr"> 00 00 00 00 00 00 00</span><span class="kw">  00 00 00 00 00 00 00 00</span>  <span style="color:#2020f0">................</span></div>
<div style="left:0;top:782px;width:1187px;height:24px;background:#f0f0f0"></div>
<div class="st" style="left:4px;top:786.5px">00003060</div>
<div style="left:77px;top:784px;width:1px;height:18px;background:#d4d4d4"></div>
<div class="st" style="left:82px;top:786.5px">00005D956BB2B060: .data:ans</div>
<div style="left:325px;top:784px;width:1px;height:18px;background:#d4d4d4"></div>
<div style="left:0;top:802px;width:1187px;height:2px;background:#f8f8f8"></div>
<div style="left:0;top:804px;width:1187px;height:1px;background:#2070c8"></div>
<div style="left:0;top:805px;width:1207px;height:1px;background:#f4f4f4"></div>
<div style="left:340px;top:784px;width:1px;height:18px;background:#d4d4d4"></div>
<div style="left:1191px;top:627px;width:16px;height:30px;background:#fff;border:1px solid #8a9096;border-right:none"></div>
<svg style="left:1195px;top:633px" width="15" height="15" viewBox="0 0 15 15"><rect x="0.5" y="0.5" width="14" height="14" fill="#fff" stroke="#3070e0"/><rect x="1" y="1" width="13" height="2" fill="#30a0f0"/><path d="M7.5 4L11 6v4l-3.5 2L4 10V6z" fill="#dde8ff" stroke="#3040e0"/></svg>
<div style="left:1192px;top:660px;width:15px;height:122px;background:#c8ffff"></div>
<div style="left:1192px;top:660px;width:15px;height:20px;background:#60d8f0"></div>
<div class="hx" style="left:1192px;top:660px;color:#0000ff">00</div>
<div class="hx" style="left:1192px;top:680px;color:#808080">00</div>
<div class="hx" style="left:1192px;top:700px;color:#808080">00</div>
<div class="hx" style="left:1192px;top:720px;color:#808080">00</div>
<div class="hx" style="left:1192px;top:740px;color:#808080">00</div>
<div class="hx" style="left:1192px;top:760px;color:#808080">00</div>
<div class="st" style="left:1194px;top:785px;font-size:13px">UN</div>
<div style="left:1192px;top:804px;width:15px;height:1px;background:#808080"></div>
</body></html>
